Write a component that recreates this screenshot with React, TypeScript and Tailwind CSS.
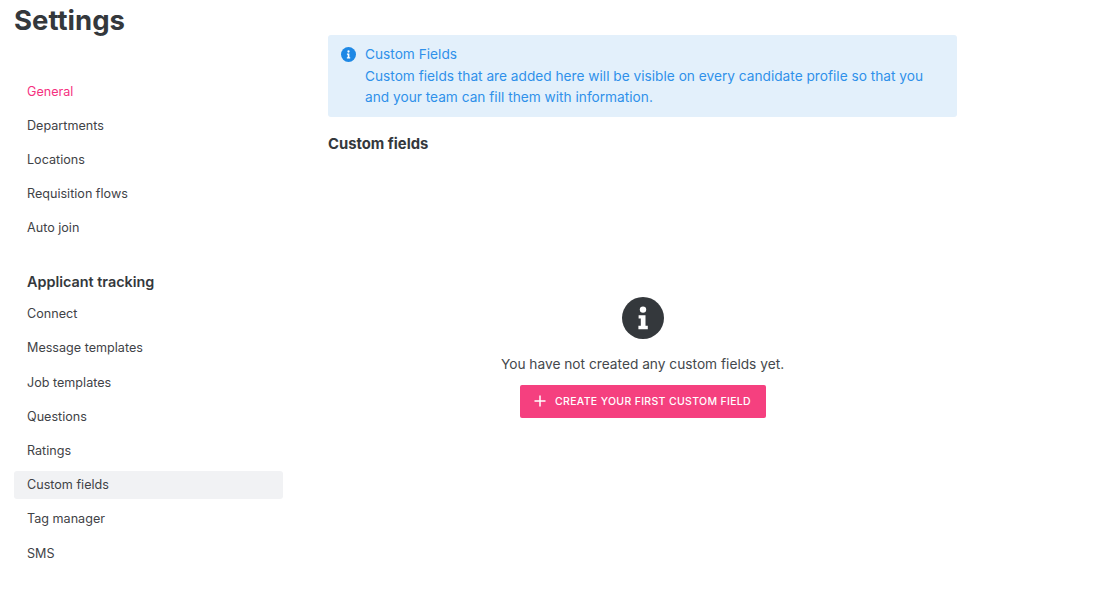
import React from "react";

const general = ["General", "Departments", "Locations", "Requisition flows", "Auto join"];
const tracking = ["Connect", "Message templates", "Job templates", "Questions", "Ratings", "Custom fields", "Tag manager", "SMS"];

function NavItem({ label }: { label: string }) {
  const pink = label === "General";
  const active = label === "Custom fields";
  return (
    <div
      className={`flex h-[28px] items-center rounded-[3px] pl-[13px] pt-[2px] text-[12.6px] ${
        pink ? "text-[#f5317f]" : "text-[#3f4347]"
      } ${active ? "bg-[#f1f2f4]" : ""}`}
    >
      {label}
    </div>
  );
}

function InfoGlyph({ className }: { className: string }) {
  return (
    <svg viewBox="0 0 42 42" className={className}>
      <circle cx="21" cy="21" r="21" fill="currentColor" />
      <circle cx="21" cy="12.6" r="3.2" fill="#fff" />
      <path d="M16.6 18.2h6.9v10.6h2.3v3.4H16.4v-3.4h2.4v-7.2h-2.2z" fill="#fff" />
    </svg>
  );
}

export default function App() {
  return (
    <div className="flex h-[600px] w-[1120px] overflow-hidden bg-white font-['Inter',sans-serif] text-[#2f3337]">
      <aside className="ml-[14px] flex w-[269px] shrink-0 flex-col">
        <h1 className="mt-[3px] h-[34px] text-[27.5px] font-bold leading-[34px] text-[#34383c]">Settings</h1>
        <nav className="mt-[40px] flex flex-col gap-[6.2px]">
          {general.map((l) => (
            <NavItem key={l} label={l} />
          ))}
        </nav>
        <h2 className="mb-[6px] mt-[28px] pl-[13px] text-[14.4px] font-semibold leading-[24px] text-[#34383c]">
          Applicant tracking
        </h2>
        <nav className="flex flex-col gap-[6.2px]">
          {tracking.map((l) => (
            <NavItem key={l} label={l} />
          ))}
        </nav>
      </aside>
      <main className="ml-[45px] mt-[35px] flex w-[629px] shrink-0 flex-col">
        <div className="flex h-[82px] rounded-[3px] bg-[#e3f0fb] pl-[13px] pt-[9px] text-[13.7px] leading-[21.5px] text-[#2f90ea]">
          <InfoGlyph className="mt-[2.5px] h-[15px] w-[15px] shrink-0 text-[#1e88e5]" />
          <div className="ml-[9px]">
            <div>Custom Fields</div>
            <div>
              Custom fields that are added here will be visible on every candidate profile so that you
              <br />
              and your team can fill them with information.
            </div>
          </div>
        </div>
        <h2 className="mt-[16px] text-[14.8px] font-bold leading-[22px] text-[#34383c]">Custom fields</h2>
        <div className="mt-[141.5px] flex flex-col items-center">
          <InfoGlyph className="h-[42px] w-[42px] text-[#34383c]" />
          <p className="mt-[14px] text-[13.73px] leading-[22px] text-[#44484c]">
            You have not created any custom fields yet.
          </p>
          <button className="mt-[10px] flex h-[33px] w-[246px] items-center justify-center gap-[9px] rounded-[2px] bg-[#f5407f] pt-[2px] text-[10.5px] font-medium tracking-[0.33px] text-white">
            <svg viewBox="0 0 12 12" className="-mt-[2px] h-[12px] w-[12px]" fill="none" stroke="currentColor" strokeWidth="1.5">
              <path d="M6 0.5v11M0.5 6h11" />
            </svg>
            CREATE YOUR FIRST CUSTOM FIELD
          </button>
        </div>
      </main>
    </div>
  );
}
